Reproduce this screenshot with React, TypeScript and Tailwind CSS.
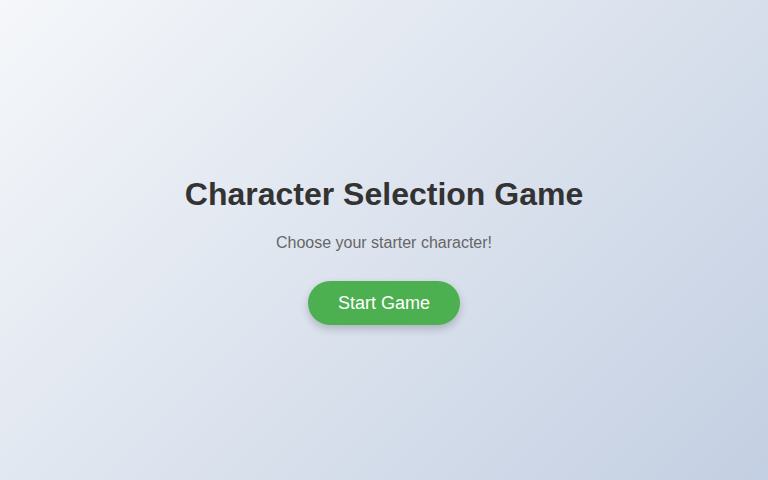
export default function App() {
  return (
    <div
      className="flex min-h-screen w-full flex-col items-center justify-center bg-[linear-gradient(135deg,#f5f7fa_0%,#c3cfe2_100%)] text-center"
      style={{ fontFamily: '"Liberation Sans", Arial, sans-serif' }}
    >
      <div className="mt-[20px] flex flex-col items-center">
        <h1 className="text-[32px] font-bold leading-[37px] text-[#333]">Character Selection Game</h1>
        <p className="mt-[21px] text-base leading-[18px] text-[#666]">Choose your starter character!</p>
        <button
          type="button"
          className="mt-[29px] rounded-full bg-[#4caf50] px-[30px] py-3 text-[18px] leading-[20px] text-white shadow-[0_4px_8px_rgba(0,0,0,0.2)]"
        >
          Start Game
        </button>
      </div>
    </div>
  )
}
